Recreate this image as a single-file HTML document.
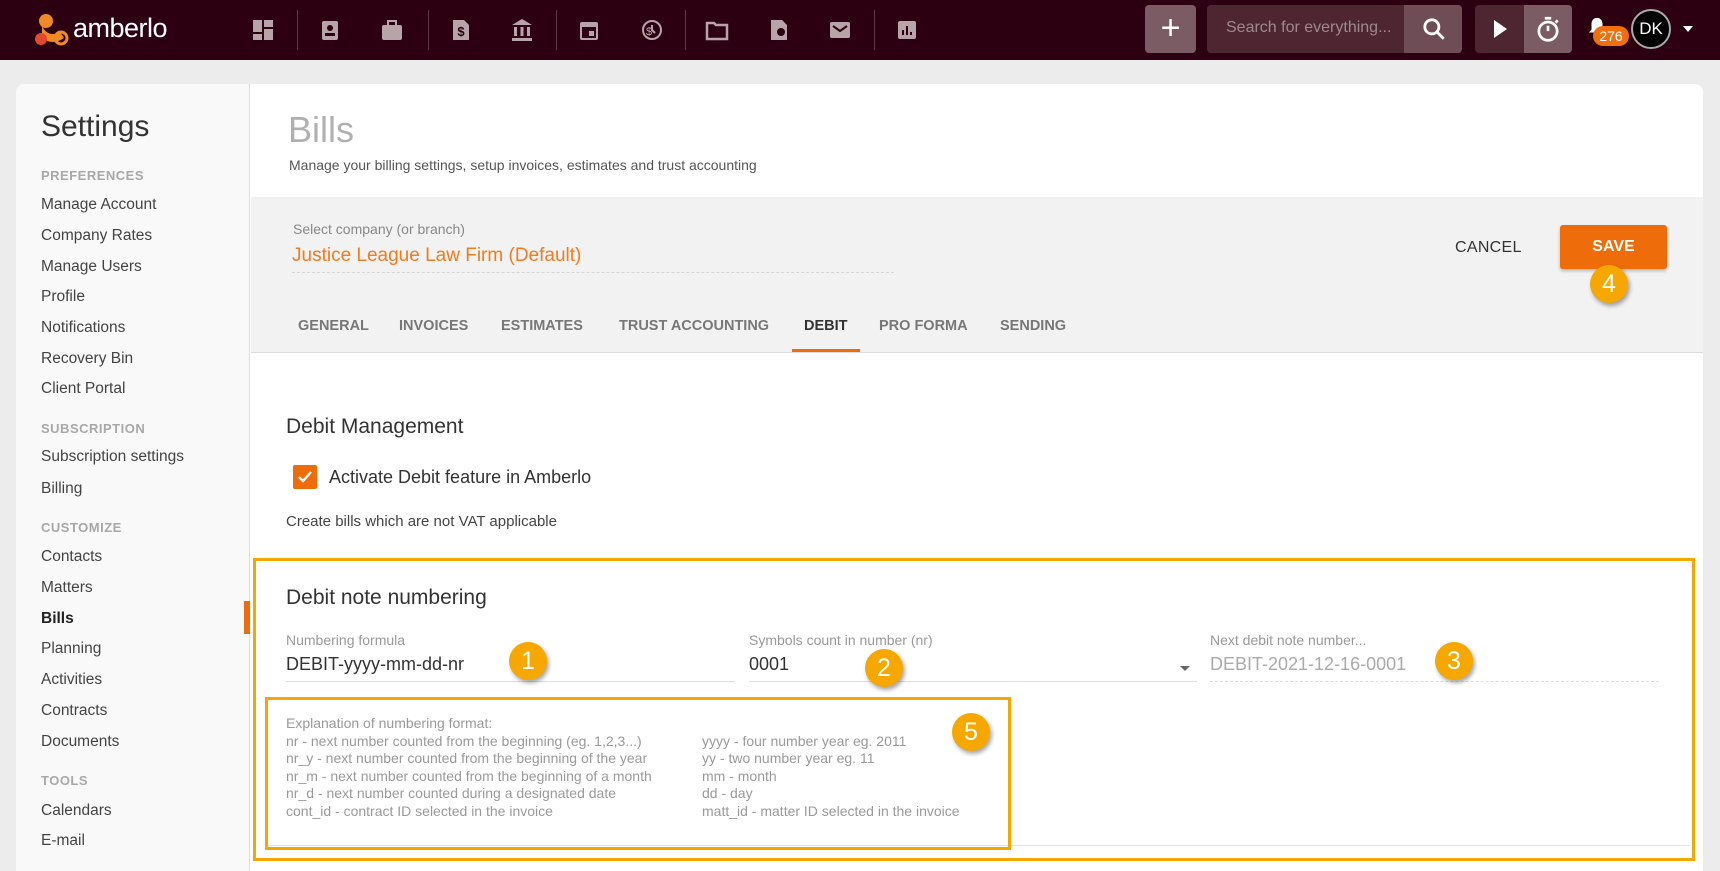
<!DOCTYPE html>
<html><head><meta charset="utf-8"><style>
*{box-sizing:border-box;margin:0;padding:0}
body{width:1720px;height:871px;overflow:hidden;background:#ececec;font-family:"Liberation Sans",sans-serif;position:relative}
.a{position:absolute}
.nav{left:0;top:0;width:1720px;height:60px;background:#2c0010}
.ic{position:absolute;top:18px;width:24px;height:24px}
.sep{position:absolute;top:10px;width:1px;height:40px;background:#5a3a44}
.side{left:16px;top:84px;width:234px;height:787px;background:#f9f9f9;border-right:1px solid #ddd;border-radius:8px 0 0 0}
.main{left:250px;top:84px;width:1453px;height:787px;background:#fff;border-radius:0 8px 0 0}
.sl{position:absolute;left:41px;font-size:13px;font-weight:bold;color:#a8a8a8;letter-spacing:.5px}
.si{position:absolute;left:41px;font-size:15.5px;color:#444}
.t{position:absolute;font-size:14.5px;font-weight:bold;color:#777}
.b{position:absolute;width:38px;height:38px;border-radius:50%;background:#f6a800;color:#fff;font-size:25px;text-align:center;line-height:38px;box-shadow:2px 3px 4px rgba(0,0,0,.35)}
.ex{position:absolute;font-size:14px;color:#9a9a9a;line-height:17.6px}
</style></head><body>
<div class="a nav">
 <svg class="a" style="left:34px;top:12px" width="40" height="36" viewBox="0 0 40 36"><circle cx="12" cy="9" r="7" fill="#f08a24"/><path d="M8 14 Q14 26 26 20 L30 26 Q18 34 8 26Z" fill="#f08a24"/><circle cx="7" cy="27" r="6" fill="#e24a2a"/><circle cx="27" cy="26" r="6" fill="none" stroke="#f08a24" stroke-width="3"/></svg>
 <div class="a" style="left:73px;top:13px;color:#fff;font-size:27px;letter-spacing:-.5px">amberlo</div>
 <svg class="ic" style="left:251px" viewBox="0 0 24 24" fill="#b7a4a9"><rect x="2" y="2" width="9" height="12"/><rect x="13" y="2" width="9" height="7"/><rect x="2" y="16" width="9" height="6"/><rect x="13" y="11" width="9" height="11"/></svg>
 <div class="sep" style="left:297px"></div>
 <svg class="ic" style="left:318px" viewBox="0 0 24 24" fill="#b7a4a9"><rect x="4" y="3" width="16" height="19" rx="2"/><circle cx="12" cy="10" r="3" fill="#2c0010"/><rect x="7" y="15" width="10" height="3" fill="#2c0010"/></svg>
 <svg class="ic" style="left:380px" viewBox="0 0 24 24" fill="#b7a4a9"><rect x="2" y="7" width="20" height="15" rx="2"/><rect x="8" y="3" width="8" height="5" fill="none" stroke="#b7a4a9" stroke-width="2"/></svg>
 <div class="sep" style="left:428px"></div>
 <svg class="ic" style="left:449px" viewBox="0 0 24 24" fill="#b7a4a9"><path d="M4 2h11l5 5v15H4z"/><text x="12" y="18" font-size="13" text-anchor="middle" fill="#2c0010" font-family="Liberation Sans" font-weight="bold">$</text></svg>
 <svg class="ic" style="left:510px" viewBox="0 0 24 24" fill="#b7a4a9"><path d="M12 1 22 7H2z"/><rect x="4" y="9" width="3" height="9"/><rect x="10.5" y="9" width="3" height="9"/><rect x="17" y="9" width="3" height="9"/><rect x="2" y="20" width="20" height="3"/></svg>
 <div class="sep" style="left:556px"></div>
 <svg class="ic" style="left:577px" viewBox="0 0 24 24" fill="#b7a4a9"><rect x="3" y="4" width="18" height="18" rx="2"/><rect x="5" y="9" width="14" height="11" fill="#2c0010"/><rect x="12" y="13" width="5" height="5"/></svg>
 <svg class="ic" style="left:639px" viewBox="0 0 24 24" fill="none" stroke="#b7a4a9" stroke-width="2"><circle cx="13" cy="12" r="9"/><path d="M13 7v5l3 3"/><text x="7" y="17" font-size="11" fill="#b7a4a9" stroke="none" font-family="Liberation Sans">$</text></svg>
 <div class="sep" style="left:685px"></div>
 <svg class="ic" style="left:705px" viewBox="0 0 24 24" fill="none" stroke="#b7a4a9" stroke-width="2.5"><path d="M2 5h7l2 2h11v14H2z"/></svg>
 <svg class="ic" style="left:767px" viewBox="0 0 24 24" fill="#b7a4a9"><path d="M4 2h11l5 5v15H4z"/><circle cx="14" cy="14" r="4" fill="#2c0010"/></svg>
 <svg class="ic" style="left:828px" viewBox="0 0 24 24" fill="#b7a4a9"><rect x="2" y="4" width="20" height="16" rx="2"/><path d="M5 8l7 5 7-5" stroke="#2c0010" stroke-width="2" fill="none"/></svg>
 <div class="sep" style="left:874px"></div>
 <svg class="ic" style="left:895px" viewBox="0 0 24 24" fill="#b7a4a9"><rect x="3" y="3" width="18" height="18" rx="2"/><rect x="7" y="12" width="2" height="5" fill="#2c0010"/><rect x="11" y="8" width="2" height="9" fill="#2c0010"/><rect x="15" y="14" width="2" height="3" fill="#2c0010"/></svg>
 <div class="a" style="left:1145px;top:5px;width:51px;height:48px;background:#7b5c65;border-radius:4px;color:#fff;font-size:34px;text-align:center;line-height:46px">+</div>
 <div class="a" style="left:1207px;top:5px;width:255px;height:48px;background:#4e2632;border-radius:4px"></div>
 <div class="a" style="left:1226px;top:19px;color:#9c8a8f;font-size:16px">Search for everything...</div>
 <div class="a" style="left:1404px;top:5px;width:58px;height:48px;background:#6e4d56;border-radius:0 4px 4px 0"></div>
 <svg class="a" style="left:1421px;top:16px" width="26" height="26" viewBox="0 0 24 24" fill="none" stroke="#fff" stroke-width="2.6"><circle cx="10" cy="10" r="6.5"/><path d="M15 15l6 6"/></svg>
 <div class="a" style="left:1475px;top:5px;width:97px;height:48px;background:#4e2632;border-radius:4px"></div>
 <div class="a" style="left:1524px;top:5px;width:48px;height:48px;background:#7b5c65;border-radius:0 4px 4px 0"></div>
 <svg class="a" style="left:1492px;top:19px" width="16" height="20"><path d="M2 1l13 9-13 9z" fill="#fff"/></svg>
 <svg class="a" style="left:1535px;top:15px" width="26" height="28" viewBox="0 0 24 26" fill="none" stroke="#fff" stroke-width="2.5"><circle cx="12" cy="15" r="8.5"/><path d="M9 3h6M12 10v5M19 7l2-2"/></svg>
 <svg class="a" style="left:1586px;top:15px" width="22" height="24" viewBox="0 0 24 24" fill="#fff"><path d="M12 2c4 0 6 3 6 7v6l3 3H3l3-3V9c0-4 2-7 6-7z"/></svg>
 <div class="a" style="left:1593px;top:26px;width:36px;height:20px;background:#f07010;border-radius:10px;color:#fff;font-size:14px;text-align:center;line-height:20px">276</div>
 <div class="a" style="left:1631px;top:9px;width:40px;height:40px;border-radius:50%;background:#000;border:2px solid #aaa;color:#fff;font-size:17px;text-align:center;line-height:36px">DK</div>
 <div class="a" style="left:1683px;top:26px;border:5px solid transparent;border-top:6px solid #fff"></div>
</div>
<div class="a side"></div>
<div class="a main"></div>
<div class="a" style="left:41px;top:110px;font-size:30px;color:#333">Settings</div>
<div class="sl" style="top:168px">PREFERENCES</div>
<div class="si" style="top:196px">Manage Account</div>
<div class="si" style="top:227px">Company Rates</div>
<div class="si" style="top:258px">Manage Users</div>
<div class="si" style="top:288px">Profile</div>
<div class="si" style="top:319px">Notifications</div>
<div class="si" style="top:350px">Recovery Bin</div>
<div class="si" style="top:380px">Client Portal</div>
<div class="sl" style="top:421px">SUBSCRIPTION</div>
<div class="si" style="top:448px">Subscription settings</div>
<div class="si" style="top:480px">Billing</div>
<div class="sl" style="top:520px">CUSTOMIZE</div>
<div class="si" style="top:548px">Contacts</div>
<div class="si" style="top:579px">Matters</div>
<div class="si" style="top:610px;font-weight:bold;color:#222">Bills</div>
<div class="a" style="left:244px;top:601px;width:6px;height:33px;background:#ee6c0a"></div>
<div class="si" style="top:640px">Planning</div>
<div class="si" style="top:671px">Activities</div>
<div class="si" style="top:702px">Contracts</div>
<div class="si" style="top:733px">Documents</div>
<div class="sl" style="top:773px">TOOLS</div>
<div class="si" style="top:802px">Calendars</div>
<div class="si" style="top:832px">E-mail</div>

<div class="a" style="left:288px;top:109px;font-size:36px;color:#b0b0b0">Bills</div>
<div class="a" style="left:289px;top:157px;font-size:14px;color:#555">Manage your billing settings, setup invoices, estimates and trust accounting</div>
<div class="a" style="left:251px;top:197px;width:1452px;height:156px;background:#f2f2f2;border-bottom:1px solid #ddd"></div>
<div class="a" style="left:293px;top:221px;font-size:14px;color:#888">Select company (or branch)</div>
<div class="a" style="left:292px;top:245px;font-size:19px;color:#f07c1e">Justice League Law Firm (Default)</div>
<div class="a" style="left:292px;top:272px;width:602px;border-top:1px dashed #d6d6d6"></div>
<div class="a" style="left:1455px;top:239px;font-size:16px;color:#333;letter-spacing:.3px">CANCEL</div>
<div class="a" style="left:1560px;top:225px;width:107px;height:44px;background:#ee6c0a;border-radius:3px;color:#fff;font-weight:bold;font-size:16px;text-align:center;line-height:44px;box-shadow:0 2px 3px rgba(0,0,0,.25)">SAVE</div>
<div class="b" style="left:1590px;top:265px">4</div>
<div class="t" style="left:298px;top:318px">GENERAL</div>
<div class="t" style="left:399px;top:318px">INVOICES</div>
<div class="t" style="left:501px;top:318px">ESTIMATES</div>
<div class="t" style="left:619px;top:318px">TRUST ACCOUNTING</div>
<div class="t" style="left:804px;top:318px;color:#333">DEBIT</div>
<div class="t" style="left:879px;top:318px">PRO FORMA</div>
<div class="t" style="left:1000px;top:318px">SENDING</div>
<div class="a" style="left:792px;top:349px;width:68px;height:3px;background:#ee6c0a"></div>

<div class="a" style="left:286px;top:415px;font-size:21px;color:#333">Debit Management</div>
<div class="a" style="left:293px;top:465px;width:24px;height:24px;background:#ee6c0a;border-radius:2px"></div>
<svg class="a" style="left:296px;top:468px" width="18" height="18"><path d="M3 9l4 4 8-9" stroke="#fff" stroke-width="2.4" fill="none"/></svg>
<div class="a" style="left:329px;top:467px;font-size:18px;color:#333">Activate Debit feature in Amberlo</div>
<div class="a" style="left:286px;top:513px;font-size:15px;color:#444">Create bills which are not VAT applicable</div>

<div class="a" style="left:253px;top:558px;width:1442px;height:303px;border:3px solid #f5a700"></div>
<div class="a" style="left:265px;top:845px;width:1425px;border-top:1px solid #e4e4e4"></div>
<div class="a" style="left:286px;top:586px;font-size:21px;color:#333">Debit note numbering</div>
<div class="a" style="left:286px;top:632px;font-size:14px;color:#999">Numbering formula</div>
<div class="a" style="left:286px;top:654px;font-size:18px;color:#333">DEBIT-yyyy-mm-dd-nr</div>
<div class="a" style="left:286px;top:681px;width:449px;border-top:1.5px solid #ddd"></div>
<div class="a" style="left:749px;top:632px;font-size:14px;color:#999">Symbols count in number (nr)</div>
<div class="a" style="left:749px;top:654px;font-size:18px;color:#333">0001</div>
<div class="a" style="left:1180px;top:666px;border:5px solid transparent;border-top:5px solid #666"></div>
<div class="a" style="left:749px;top:681px;width:448px;border-top:1.5px solid #ddd"></div>
<div class="a" style="left:1210px;top:632px;font-size:14px;color:#999">Next debit note number...</div>
<div class="a" style="left:1210px;top:654px;font-size:18px;color:#aaa">DEBIT-2021-12-16-0001</div>
<div class="a" style="left:1210px;top:681px;width:449px;border-top:1.5px dashed #ddd"></div>
<div class="b" style="left:509px;top:642px">1</div>
<div class="b" style="left:865px;top:649px">2</div>
<div class="b" style="left:1435px;top:642px">3</div>

<div class="a" style="left:265px;top:697px;width:746px;height:153px;border:3px solid #f5a700"></div>
<div class="ex" style="left:286px;top:715px">Explanation of numbering format:<br>nr - next number counted from the beginning (eg. 1,2,3...)<br>nr_y - next number counted from the beginning of the year<br>nr_m - next number counted from the beginning of a month<br>nr_d - next number counted during a designated date<br>cont_id - contract ID selected in the invoice</div>
<div class="ex" style="left:702px;top:732.6px">yyyy - four number year eg. 2011<br>yy - two number year eg. 11<br>mm - month<br>dd - day<br>matt_id - matter ID selected in the invoice</div>
<div class="b" style="left:952px;top:713px">5</div>
</body></html>
